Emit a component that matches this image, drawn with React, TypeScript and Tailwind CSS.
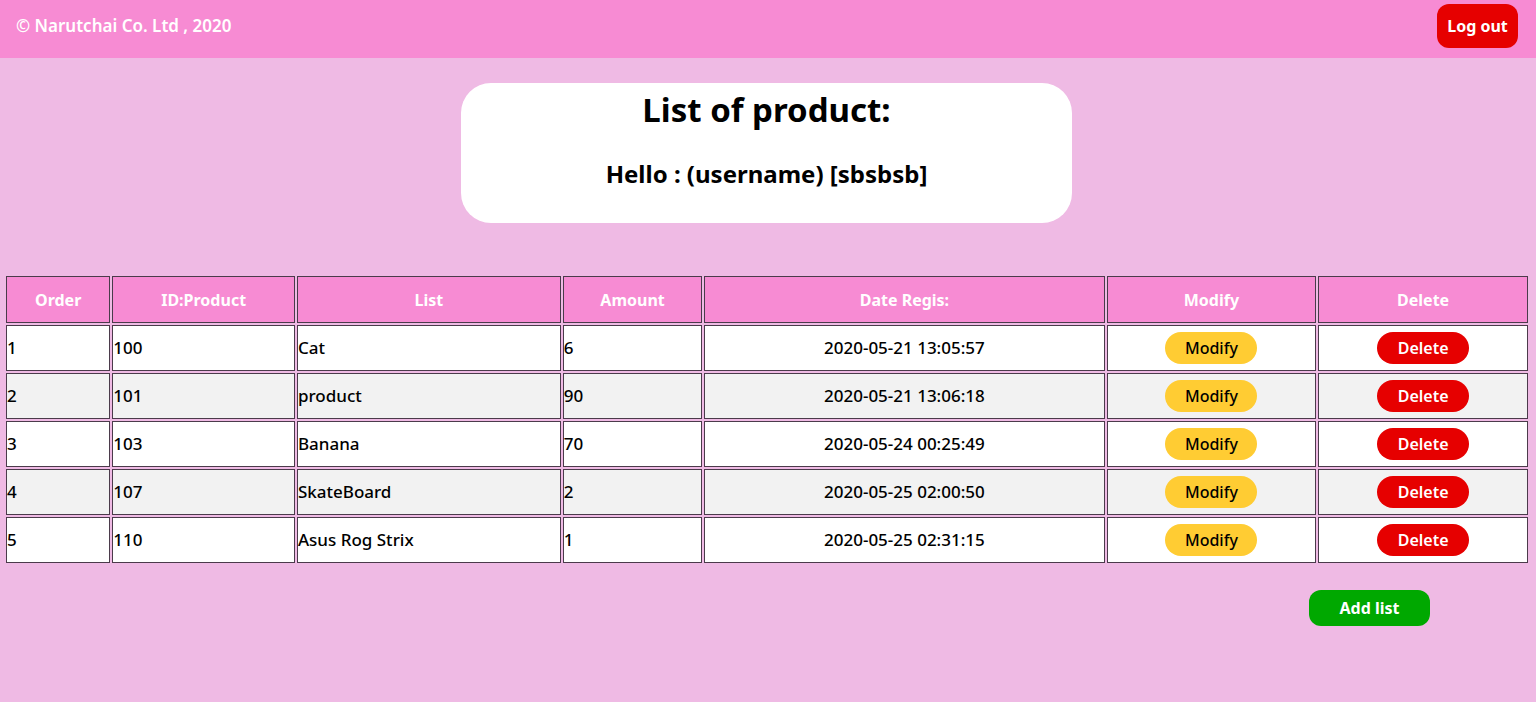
const products = [
  { order: 1, id: '100', list: 'Cat', amount: '6', date: '2020-05-21 13:05:57' },
  { order: 2, id: '101', list: 'product', amount: '90', date: '2020-05-21 13:06:18' },
  { order: 3, id: '103', list: 'Banana', amount: '70', date: '2020-05-24 00:25:49' },
  { order: 4, id: '107', list: 'SkateBoard', amount: '2', date: '2020-05-25 02:00:50' },
  { order: 5, id: '110', list: 'Asus Rog Strix', amount: '1', date: '2020-05-25 02:31:15' },
]

const headers = ['Order', 'ID:Product', 'List', 'Amount', 'Date Regis:', 'Modify', 'Delete']

export default function App() {
  return (
    <div
      className="min-h-[702px] bg-[#efbae4] text-black"
      style={{ fontFamily: '"Noto Sans", Lato, sans-serif' }}
    >
      {/* Top bar */}
      <header className="flex h-[58px] items-start justify-between bg-[#f78bd3] pl-4 pr-[18px]">
        <span className="mt-[13px] text-[17px] font-semibold text-white">© Narutchai Co. Ltd , 2020</span>
        <button className="mt-1 h-11 w-[81px] rounded-xl bg-[#e60000] text-[16px] font-bold text-white">
          Log out
        </button>
      </header>

      {/* Title card */}
      <div className="mt-[25px] flex justify-center">
        <div className="mr-[3px] flex h-[140px] w-[611px] flex-col items-center rounded-[30px] bg-white">
          <h1 className="mt-[5px] text-[33px] font-bold leading-[44px]">List of product:</h1>
          <h2 className="mt-[26px] text-[24px] font-bold leading-[32px]">Hello : (username) [sbsbsb]</h2>
        </div>
      </div>

      {/* Product table */}
      <table className="ml-[4px] mt-[51px] w-[1526px] table-fixed border-separate border-spacing-[2px] text-[17px]">
        <colgroup>
          <col className="w-[104px]" />
          <col className="w-[182px]" />
          <col className="w-[263px]" />
          <col className="w-[139px]" />
          <col className="w-[399px]" />
          <col className="w-[209px]" />
          <col className="w-[209px]" />
        </colgroup>
        <thead>
          <tr>
            {headers.map((h) => (
              <th
                key={h}
                className="h-[47px] border border-[#4b3b4b] bg-[#f78bd3] text-center text-[16px] font-bold text-white"
              >
                {h}
              </th>
            ))}
          </tr>
        </thead>
        <tbody>
          {products.map((p, i) => (
            <tr key={p.id} className={i % 2 === 1 ? 'bg-[#f2f2f2]' : 'bg-white'}>
              <td className="h-[46px] border border-[#4b3b4b] font-medium">{p.order}</td>
              <td className="border border-[#4b3b4b] font-medium">{p.id}</td>
              <td className="border border-[#4b3b4b] font-medium">{p.list}</td>
              <td className="border border-[#4b3b4b] font-medium">{p.amount}</td>
              <td className="border border-[#4b3b4b] text-center font-medium">{p.date}</td>
              <td className="border border-[#4b3b4b] text-center">
                <button className="h-8 w-[92px] rounded-full bg-[#ffcc33] text-[16px] font-medium text-black">
                  Modify
                </button>
              </td>
              <td className="border border-[#4b3b4b] text-center">
                <button className="h-8 w-[92px] rounded-full bg-[#e60000] text-[16px] font-semibold text-white">
                  Delete
                </button>
              </td>
            </tr>
          ))}
        </tbody>
      </table>

      <div className="mt-[25px] flex justify-end pr-[106px]">
        <button className="h-9 w-[121px] rounded-xl bg-[#00a800] text-[16px] font-bold text-white">
          Add list
        </button>
      </div>
    </div>
  )
}
